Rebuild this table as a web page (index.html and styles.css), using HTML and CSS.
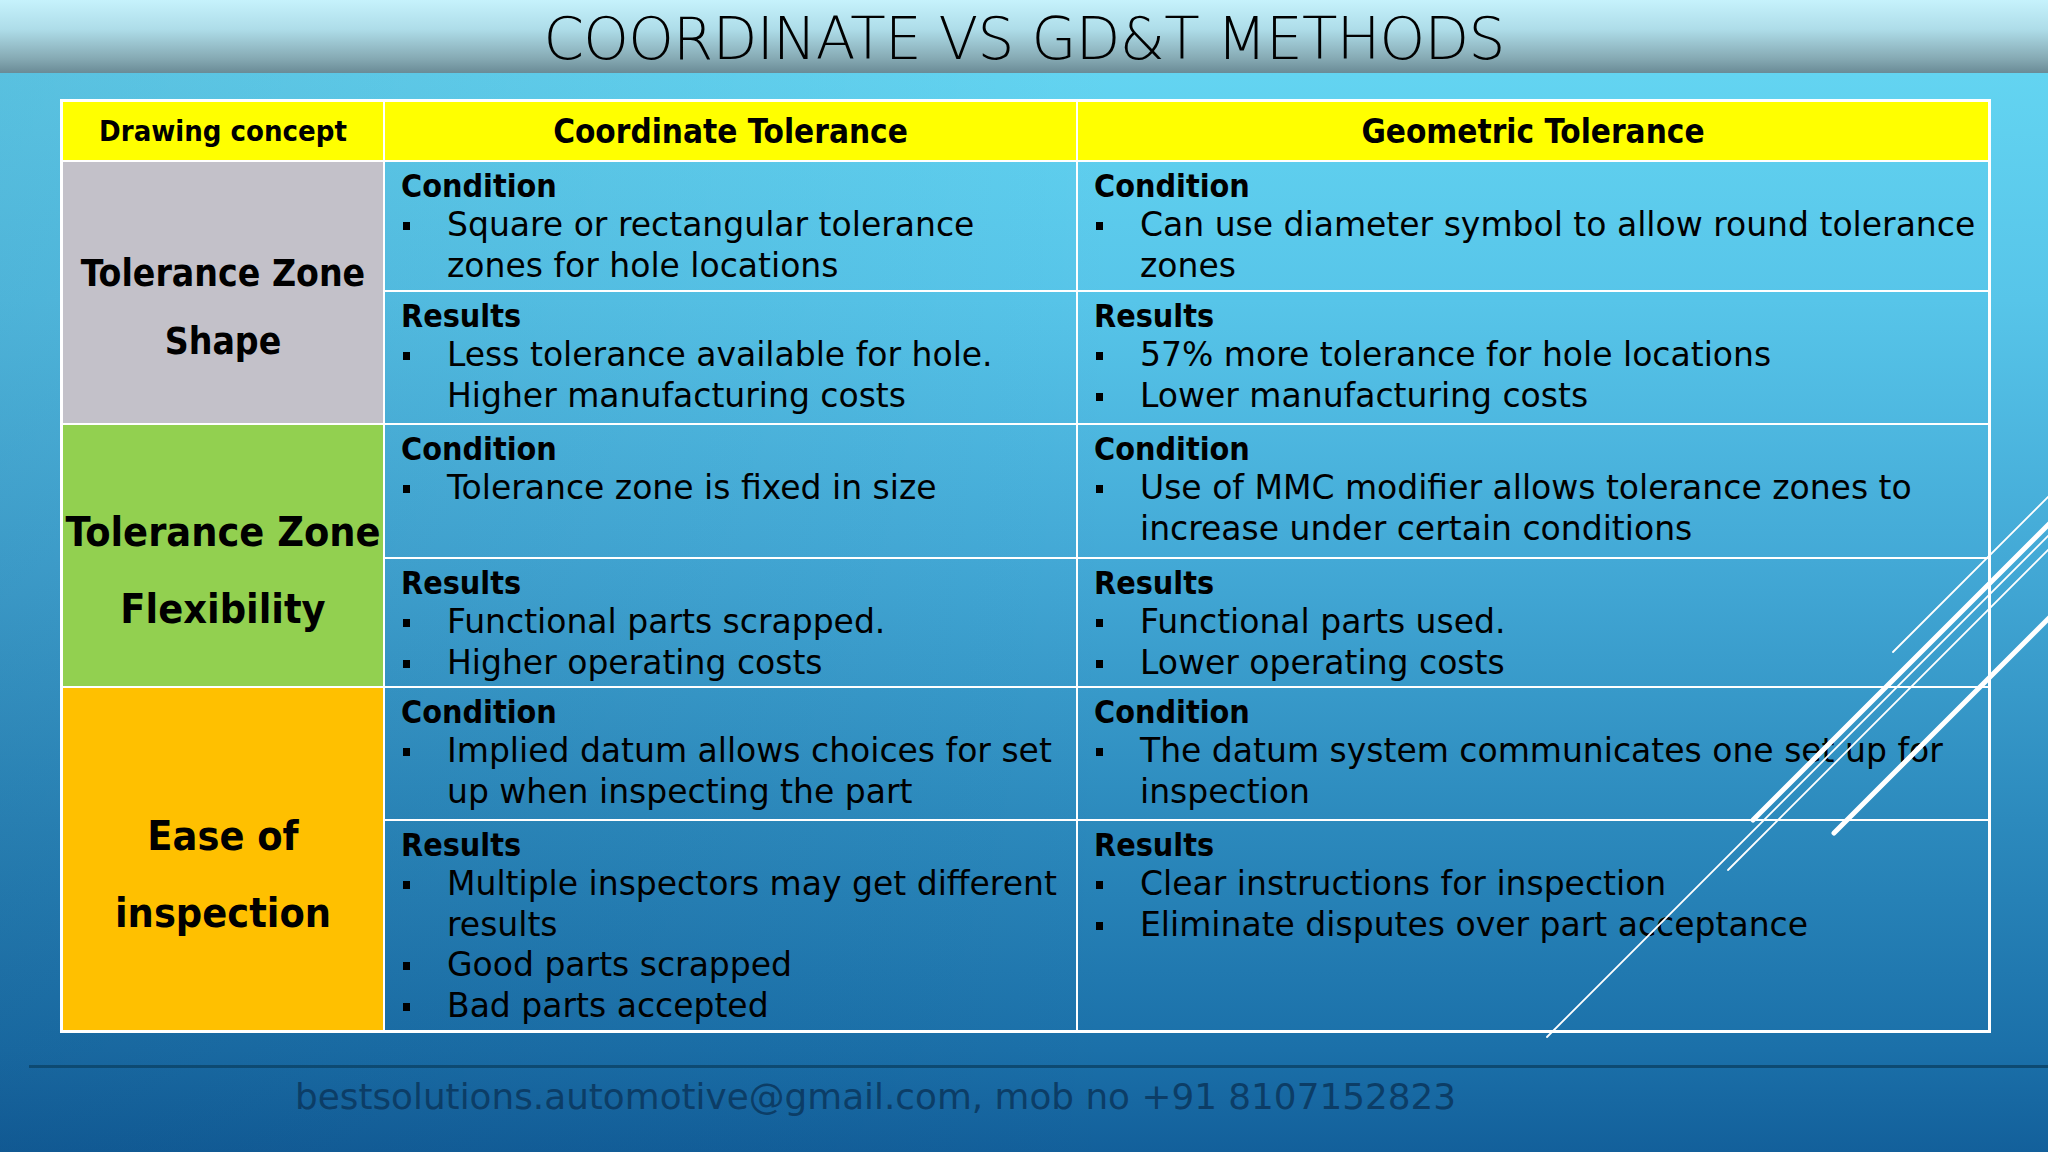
FILE: index.html
```html
<!DOCTYPE html>
<html lang="en">
<head>
<meta charset="utf-8">
<title>Coordinate vs GD&amp;T Methods</title>
<link rel="stylesheet" href="styles.css">
</head>
<body>
<div class="slide">
  <header class="title-band">
    <h1>COORDINATE VS GD&amp;T METHODS</h1>
  </header>

  <div class="table">
    <div class="th th-first">Drawing concept</div>
    <div class="th">Coordinate Tolerance</div>
    <div class="th">Geometric Tolerance</div>

    <div class="label label-shape">Tolerance Zone<br>Shape</div>
    <div class="cell">
      <div class="hd">Condition</div>
      <ul><li>Square or rectangular tolerance<br>zones for hole locations</li></ul>
    </div>
    <div class="cell">
      <div class="hd">Condition</div>
      <ul><li>Can use diameter symbol to allow round tolerance<br>zones</li></ul>
    </div>
    <div class="cell">
      <div class="hd">Results</div>
      <ul><li>Less tolerance available for hole.<br>Higher manufacturing costs</li></ul>
    </div>
    <div class="cell">
      <div class="hd">Results</div>
      <ul><li>57% more tolerance for hole locations</li><li>Lower manufacturing costs</li></ul>
    </div>

    <div class="label label-flex">Tolerance Zone<br>Flexibility</div>
    <div class="cell">
      <div class="hd">Condition</div>
      <ul><li>Tolerance zone is fixed in size</li></ul>
    </div>
    <div class="cell">
      <div class="hd">Condition</div>
      <ul><li>Use of MMC modifier allows tolerance zones to<br>increase under certain conditions</li></ul>
    </div>
    <div class="cell">
      <div class="hd">Results</div>
      <ul><li>Functional parts scrapped.</li><li>Higher operating costs</li></ul>
    </div>
    <div class="cell">
      <div class="hd">Results</div>
      <ul><li>Functional parts used.</li><li>Lower operating costs</li></ul>
    </div>

    <div class="label label-ease">Ease of<br>inspection</div>
    <div class="cell">
      <div class="hd">Condition</div>
      <ul><li>Implied datum allows choices for set<br>up when inspecting the part</li></ul>
    </div>
    <div class="cell">
      <div class="hd">Condition</div>
      <ul><li>The datum system communicates one set up for<br>inspection</li></ul>
    </div>
    <div class="cell">
      <div class="hd">Results</div>
      <ul><li>Multiple inspectors may get different<br>results</li><li>Good parts scrapped</li><li>Bad parts accepted</li></ul>
    </div>
    <div class="cell">
      <div class="hd">Results</div>
      <ul><li>Clear instructions for inspection</li><li>Eliminate disputes over part acceptance</li></ul>
    </div>
  </div>

  <footer class="footer">bestsolutions.automotive@gmail.com, mob no +91 8107152823</footer>

  <svg class="deco" width="2048" height="1152" viewBox="0 0 2048 1152" aria-hidden="true">
    <g stroke="#ffffff" stroke-linecap="round" fill="none">
      <line x1="1893" y1="652" x2="2050" y2="495" stroke-width="1.8"/>
      <line x1="1753" y1="820" x2="2050" y2="523" stroke-width="5"/>
      <line x1="1547" y1="1037" x2="2050" y2="534" stroke-width="1.8"/>
      <line x1="1728" y1="870" x2="2050" y2="548" stroke-width="1.8"/>
      <line x1="1834" y1="833" x2="2050" y2="617" stroke-width="5"/>
    </g>
  </svg>
</div>
</body>
</html>
```

FILE: styles.css
```css
html, body {
  margin: 0;
  padding: 0;
}

body {
  width: 2048px;
  height: 1152px;
  overflow: hidden;
  font-family: "DejaVu Sans", "Liberation Sans", sans-serif;
  color: #000;
}

.slide {
  position: relative;
  width: 2048px;
  height: 1152px;
  overflow: hidden;
  background:
    linear-gradient(90deg, rgba(0, 25, 70, 0.10) 0%, rgba(0, 25, 70, 0) 55%),
    linear-gradient(180deg, #63d4f1 73px, #57c5e9 300px, #43a9d6 560px, #2c8abd 820px, #1b70a9 1050px, #13609b 1152px);
}

.title-band {
  height: 73px;
  box-sizing: border-box;
  padding-top: 4px;
  display: flex;
  align-items: center;
  justify-content: center;
  background: linear-gradient(180deg, #c6f2fc 0%, #aedde9 40%, #86aab4 80%, #6a8b96 100%);
}

.title-band h1 {
  margin: 0;
  font-size: 58px;
  font-weight: 200;
  line-height: 1;
  letter-spacing: -0.7px;
  color: #000;
}

.table {
  display: grid;
  grid-template-columns: 320px 693px 912px;
  grid-template-rows: 58px 130px 133px 134px 129px 133px 211px;
  width: 1931px;
  box-sizing: border-box;
  border: 3px solid #fff;
  margin: 26px 0 0 60px;
}

.th,
.label,
.hd {
  font-family: "DejaVu Sans Condensed", "DejaVu Sans", sans-serif;
  font-stretch: condensed;
  font-weight: bold;
}

.th {
  background: #ffff00;
  font-size: 33px;
  display: flex;
  align-items: center;
  justify-content: center;
  white-space: nowrap;
}

.th + .th {
  border-left: 2px solid #fff;
}

.th-first {
  font-size: 29px;
}

.label {
  grid-column: 1;
  grid-row: span 2;
  border-top: 2px solid #fff;
  box-sizing: border-box;
  display: flex;
  align-items: center;
  justify-content: center;
  text-align: center;
  font-size: 41px;
  line-height: 77px;
  padding-top: 31px;
  white-space: nowrap;
}

.label-shape {
  background: #c3c1c9;
  font-size: 37px;
  line-height: 68px;
  padding-top: 30px;
}

.label-flex {
  background: #92d050;
}

.label-ease {
  background: #ffc000;
}

.cell {
  border-top: 2px solid #fff;
  border-left: 2px solid #fff;
  box-sizing: border-box;
  padding: 9px 8px 0 16px;
}

.hd {
  font-size: 32px;
  line-height: 30px;
}

.cell ul {
  list-style: none;
  margin: 4px 0 0;
  padding: 0;
}

.cell li {
  position: relative;
  padding-left: 46px;
  font-size: 33px;
  line-height: 40.5px;
  white-space: nowrap;
}

.cell li::before {
  content: "";
  position: absolute;
  left: 2px;
  top: 17px;
  width: 7px;
  height: 8px;
  background: #000;
}

.footer {
  margin: 32px 0 0 29px;
  border-top: 3px solid #0d4a72;
  padding: 7px 0 0 266px;
  font-size: 35.8px;
  line-height: 44px;
  color: #0c3d66;
  white-space: nowrap;
}

.deco {
  position: absolute;
  left: 0;
  top: 0;
  pointer-events: none;
}
```
